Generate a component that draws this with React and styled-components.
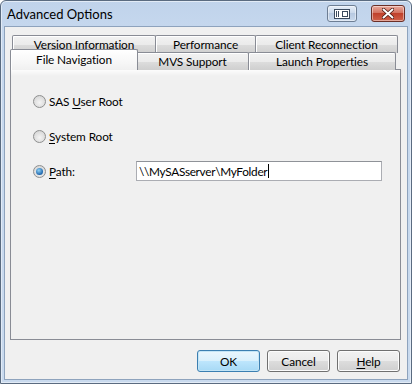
import styled, { createGlobalStyle } from 'styled-components'

const GlobalStyle = createGlobalStyle`
  * { box-sizing: border-box; }
  body {
    margin: 0;
    background: #ffffff;
    font-family: Lato, "Noto Sans", sans-serif;
    font-size: 11.8px;
    letter-spacing: -0.1px;
    color: #000;
  }
`

const Frame = styled.div`
  width: 412px;
  height: 384px;
  display: flex;
  flex-direction: column;
  border: 1px solid #5a6b80;
  border-radius: 6px 6px 0 0;
  background: linear-gradient(#c0d3eb, #c6d8ee 30px, #c9daee);
  box-shadow: inset 0 0 0 1px #e2ebf6;
  overflow: hidden;
`

const TitleBar = styled.div`
  height: 25px;
  flex: none;
  display: flex;
  align-items: center;
  padding: 0 6px 0 6px;
`

const Title = styled.div`
  flex: 1;
  font-size: 13px;
  letter-spacing: 0;
  padding-top: 1px;
`

const CaptionButton = styled.div`
  width: ${p => p.w}px;
  height: 17px;
  margin-left: ${p => p.gap}px;
  border: 1px solid ${p => (p.close ? '#6b2f27' : '#6d7e94')};
  border-radius: 3px;
  display: flex;
  align-items: center;
  justify-content: center;
  background: ${p =>
    p.close
      ? 'linear-gradient(#e9a99c, #d37361 45%, #c0412c 50%, #d0614a)'
      : 'linear-gradient(#e6eef8, #cbd9eb 45%, #b7c9e1 50%, #c9d9ec)'};
  box-shadow: inset 0 0 0 1px rgba(255, 255, 255, 0.45);
`

const Client = styled.div`
  flex: 1;
  margin: 0 3px 3px 3px;
  background: #f0f0f0;
  border: 1px solid #8ea3bd;
  display: flex;
  flex-direction: column;
  padding: 8px 7px 0 5px;
`

const TabRow = styled.div`
  display: flex;
  height: 17px;
  padding-left: ${p => p.indent}px;
  position: relative;
  z-index: ${p => p.layer};
`

const Tab = styled.div`
  width: ${p => p.w}px;
  height: 18px;
  flex: none;
  margin-left: -1px;
  border: 1px solid #898c95;
  border-bottom: none;
  border-radius: 2px 2px 0 0;
  background: linear-gradient(#f2f2f2, #ebebeb 50%, #dddddd 50%, #cfcfcf);
  box-shadow: inset 1px 1px 0 #ffffff;
  display: flex;
  justify-content: center;
  align-items: center;
  line-height: 1;
  padding-top: 1px;
  white-space: nowrap;
  &:first-child { margin-left: 0; }
`

const ActiveTab = styled(Tab)`
  height: 21px;
  margin-top: -3px;
  margin-right: -1px;
  background: linear-gradient(#ffffff, #f7f7f7 60%, #f0f0f0);
  box-shadow: inset 1px 1px 0 #ffffff;
  align-items: flex-start;
  padding-top: 4px;
  position: relative;
  z-index: 2;
`

const Panel = styled.div`
  width: 391px;
  height: 271px;
  border: 1px solid #898c95;
  background: linear-gradient(#fcfcfc, #f0f0f0 6px);
  display: flex;
  flex-direction: column;
  gap: 15px;
  padding: 21px 0 0 22px;
  position: relative;
  z-index: 1;
`

const RadioRow = styled.label`
  display: flex;
  align-items: center;
  height: 20px;
`

const RadioDot = styled.span`
  width: 13px;
  height: 13px;
  border-radius: 50%;
  flex: none;
  border: 1px solid #8e8f8f;
  background: radial-gradient(circle at 50% 60%, #f4f4f4, #d6d6d6 80%);
  display: flex;
  align-items: center;
  justify-content: center;
  &::after {
    content: '';
    width: 7px;
    height: 7px;
    border-radius: 50%;
    display: ${p => (p.checked ? 'block' : 'none')};
    background: radial-gradient(circle at 40% 35%, #8fd2f5, #1f66ad 70%, #0d4a8a);
  }
`

const LabelText = styled.span`
  margin-left: 3px;
  min-width: ${p => p.w || 0}px;
`

const Key = styled.span`
  text-decoration: underline;
  text-underline-offset: 2px;
`

const PathInput = styled.div`
  width: 246px;
  height: 20px;
  border: 1px solid #abadb3;
  border-top-color: #8f9298;
  background: #ffffff;
  display: flex;
  align-items: center;
  padding-left: 2px;
  white-space: nowrap;
  letter-spacing: -0.3px;
`

const Caret = styled.span`
  width: 1px;
  height: 14px;
  background: #000;
  margin-left: 1px;
`

const ButtonBar = styled.div`
  display: flex;
  justify-content: flex-end;
  gap: 7px;
  margin-top: 10px;
`

const Button = styled.div`
  width: 63px;
  height: 22px;
  border: 1px solid ${p => (p.primary ? '#3c7fb1' : '#707070')};
  border-radius: 3px;
  display: flex;
  align-items: center;
  justify-content: center;
  background: ${p =>
    p.primary
      ? 'linear-gradient(#eaf6fd, #d9f0fc 50%, #bee6fd 50%, #a7d9f5)'
      : 'linear-gradient(#f2f2f2, #ebebeb 50%, #dddddd 50%, #cfcfcf)'};
  box-shadow: inset 0 0 0 1px ${p => (p.primary ? '#c4e5f6' : '#fcfcfc')};
`

const Radio = ({ checked, children, w }) => (
  <RadioRow>
    <RadioDot checked={checked} />
    <LabelText w={w}>{children}</LabelText>
  </RadioRow>
)

export default function App() {
  return (
    <>
      <GlobalStyle />
      <Frame>
        <TitleBar>
          <Title>Advanced Options</Title>
          <CaptionButton w={30} gap={0}>
            <svg width="16" height="10" viewBox="0 0 16 10">
              <rect x="0.5" y="0.5" width="15" height="9" fill="#fff" stroke="#3b4a5e" />
              <rect x="2" y="2" width="1" height="6" fill="#3b4a5e" />
              <rect x="4" y="2" width="1" height="6" fill="#3b4a5e" />
              <rect x="8.5" y="2.5" width="5" height="5" fill="#fff" stroke="#3b4a5e" />
            </svg>
          </CaptionButton>
          <CaptionButton close w={34} gap={14}>
            <svg width="12" height="11" viewBox="0 0 12 11">
              <path d="M1.5 1.5 L10.5 9.5 M10.5 1.5 L1.5 9.5" stroke="#4a1a14" strokeWidth="3.6" strokeLinecap="round" />
              <path d="M1.5 1.5 L10.5 9.5 M10.5 1.5 L1.5 9.5" stroke="#ffffff" strokeWidth="2" strokeLinecap="round" />
            </svg>
          </CaptionButton>
        </TitleBar>
        <Client>
          <TabRow indent={2} layer={0}>
            <Tab w={144}>Version Information</Tab>
            <Tab w={101}>Performance</Tab>
            <Tab w={143}>Client Reconnection</Tab>
          </TabRow>
          <TabRow indent={0} layer={2}>
            <ActiveTab w={128}>File Navigation</ActiveTab>
            <Tab w={113}>MVS Support</Tab>
            <Tab w={148}>Launch Properties</Tab>
          </TabRow>
          <Panel>
            <Radio>
              SAS <Key>U</Key>ser Root
            </Radio>
            <Radio>
              <Key>S</Key>ystem Root
            </Radio>
            <RadioRow>
              <RadioDot checked />
              <LabelText w={87}>
                <Key>P</Key>ath:
              </LabelText>
              <PathInput>
                \\MySASserver\MyFolder
                <Caret />
              </PathInput>
            </RadioRow>
          </Panel>
          <ButtonBar>
            <Button primary>OK</Button>
            <Button>Cancel</Button>
            <Button>
              <span>
                <Key>H</Key>elp
              </span>
            </Button>
          </ButtonBar>
        </Client>
      </Frame>
    </>
  )
}
